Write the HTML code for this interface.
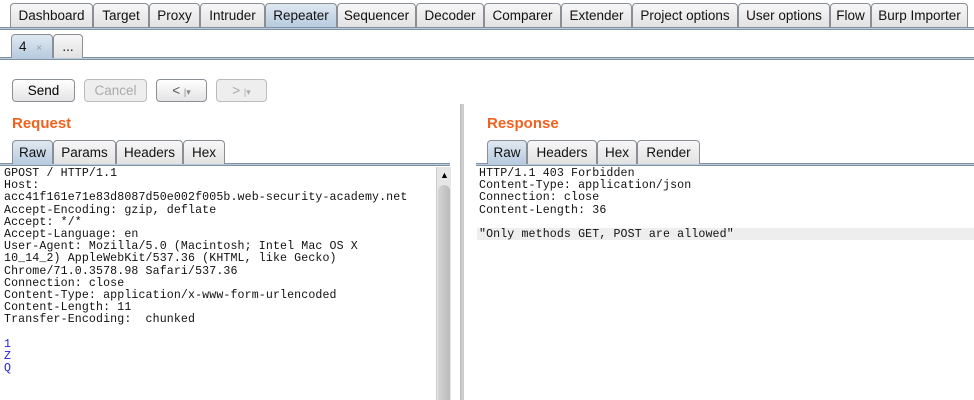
<!DOCTYPE html><html><head><style>
*{margin:0;padding:0;box-sizing:border-box}
body{width:974px;height:400px;overflow:hidden;background:#fff;font-family:"Liberation Sans",sans-serif;position:relative}
.tab{position:absolute;height:24px;border:1px solid #8a8f96;border-bottom:none;border-radius:4px 4px 0 0;background:linear-gradient(#f7f7f7,#e2e2e2);font-size:13.5px;color:#111;text-align:center;line-height:23px}
.sel{background:linear-gradient(#dfe8f1,#b7cbdf)}
.line{position:absolute;left:0;height:3px;background:#b9cbdc;border-top:1px solid #7f90a3;border-bottom:1px solid #7f90a3}
.btn{position:absolute;top:79px;height:23px;border:1px solid #8a8f96;border-radius:4px;background:linear-gradient(#fff,#e4e4e4);font-size:13.5px;text-align:center;line-height:21px}
.dis{color:#aaa;border-color:#bbb;background:#eee}
.h{position:absolute;top:115px;color:#f0621e;font-weight:bold;font-size:15px}
pre{position:absolute;font-family:"Liberation Mono",monospace;font-size:11.6px;letter-spacing:0.12px;line-height:12.2px;color:#111}
</style></head><body>
<div class="line" style="top:27px;width:974px"></div>
<div class="tab" style="left:10px;top:3px;width:83px">Dashboard</div>
<div class="tab" style="left:93px;top:3px;width:56px">Target</div>
<div class="tab" style="left:149px;top:3px;width:51px">Proxy</div>
<div class="tab" style="left:200px;top:3px;width:65px">Intruder</div>
<div class="tab sel" style="left:265px;top:3px;width:72px">Repeater</div>
<div class="tab" style="left:337px;top:3px;width:79px">Sequencer</div>
<div class="tab" style="left:416px;top:3px;width:68px">Decoder</div>
<div class="tab" style="left:484px;top:3px;width:77px">Comparer</div>
<div class="tab" style="left:561px;top:3px;width:71px">Extender</div>
<div class="tab" style="left:632px;top:3px;width:106px">Project options</div>
<div class="tab" style="left:738px;top:3px;width:92px">User options</div>
<div class="tab" style="left:830px;top:3px;width:41px">Flow</div>
<div class="tab" style="left:871px;top:3px;width:97px">Burp Importer</div>
<div class="line" style="top:57px;width:974px"></div>
<div class="tab sel" style="left:11px;top:34px;width:42px;text-align:left;padding-left:7px">4 <span style="color:#999;font-size:10px;margin-left:6px">×</span></div>
<div class="tab" style="left:53px;top:34px;width:30px">...</div>
<div class="btn" style="left:12px;width:63px">Send</div>
<div class="btn dis" style="left:84px;width:63px">Cancel</div>
<div class="btn" style="left:156px;width:51px;color:#555">&lt; <span style="font-size:9px;color:#888">|▾</span></div>
<div class="btn dis" style="left:216px;width:51px">&gt; <span style="font-size:9px">|▾</span></div>
<div style="position:absolute;left:460px;top:104px;width:4px;height:296px;background:#ccc;border-left:1px solid #bbb"></div>
<div class="h" style="left:12px">Request</div>
<div class="h" style="left:487px">Response</div>
<div class="line" style="left:0;top:163px;width:450px"></div>
<div class="tab sel" style="left:12px;top:140px;width:41px">Raw</div>
<div class="tab" style="left:53px;top:140px;width:63px">Params</div>
<div class="tab" style="left:116px;top:140px;width:67px">Headers</div>
<div class="tab" style="left:183px;top:140px;width:42px">Hex</div>
<div class="line" style="left:476px;top:163px;width:498px"></div>
<div class="tab sel" style="left:487px;top:140px;width:40px">Raw</div>
<div class="tab" style="left:527px;top:140px;width:70px">Headers</div>
<div class="tab" style="left:597px;top:140px;width:40px">Hex</div>
<div class="tab" style="left:637px;top:140px;width:63px">Render</div>
<div style="position:absolute;left:436px;top:167px;width:15px;height:233px;background:#e6e6e6;border-left:1px solid #ccc"></div>
<div style="position:absolute;left:440px;top:170px;font-size:9px">▲</div>
<div style="position:absolute;left:438px;top:185px;width:12px;height:215px;background:linear-gradient(90deg,#d4d4d4,#bbb);border-radius:6px 6px 0 0"></div>
<pre style="left:4px;top:168px">GPOST / HTTP/1.1
Host:
acc41f161e71e83d8087d50e002f005b.web-security-academy.net
Accept-Encoding: gzip, deflate
Accept: */*
Accept-Language: en
User-Agent: Mozilla/5.0 (Macintosh; Intel Mac OS X
10_14_2) AppleWebKit/537.36 (KHTML, like Gecko)
Chrome/71.0.3578.98 Safari/537.36
Connection: close
Content-Type: application/x-www-form-urlencoded
Content-Length: 11
Transfer-Encoding:  chunked

<span style="color:#2424d0">1
Z
Q</span></pre>
<div style="position:absolute;left:477px;top:228px;width:497px;height:12px;background:#eee"></div>
<pre style="left:479px;top:168px">HTTP/1.1 403 Forbidden
Content-Type: application/json
Connection: close
Content-Length: 36

"Only methods GET, POST are allowed"</pre>
</body></html>
